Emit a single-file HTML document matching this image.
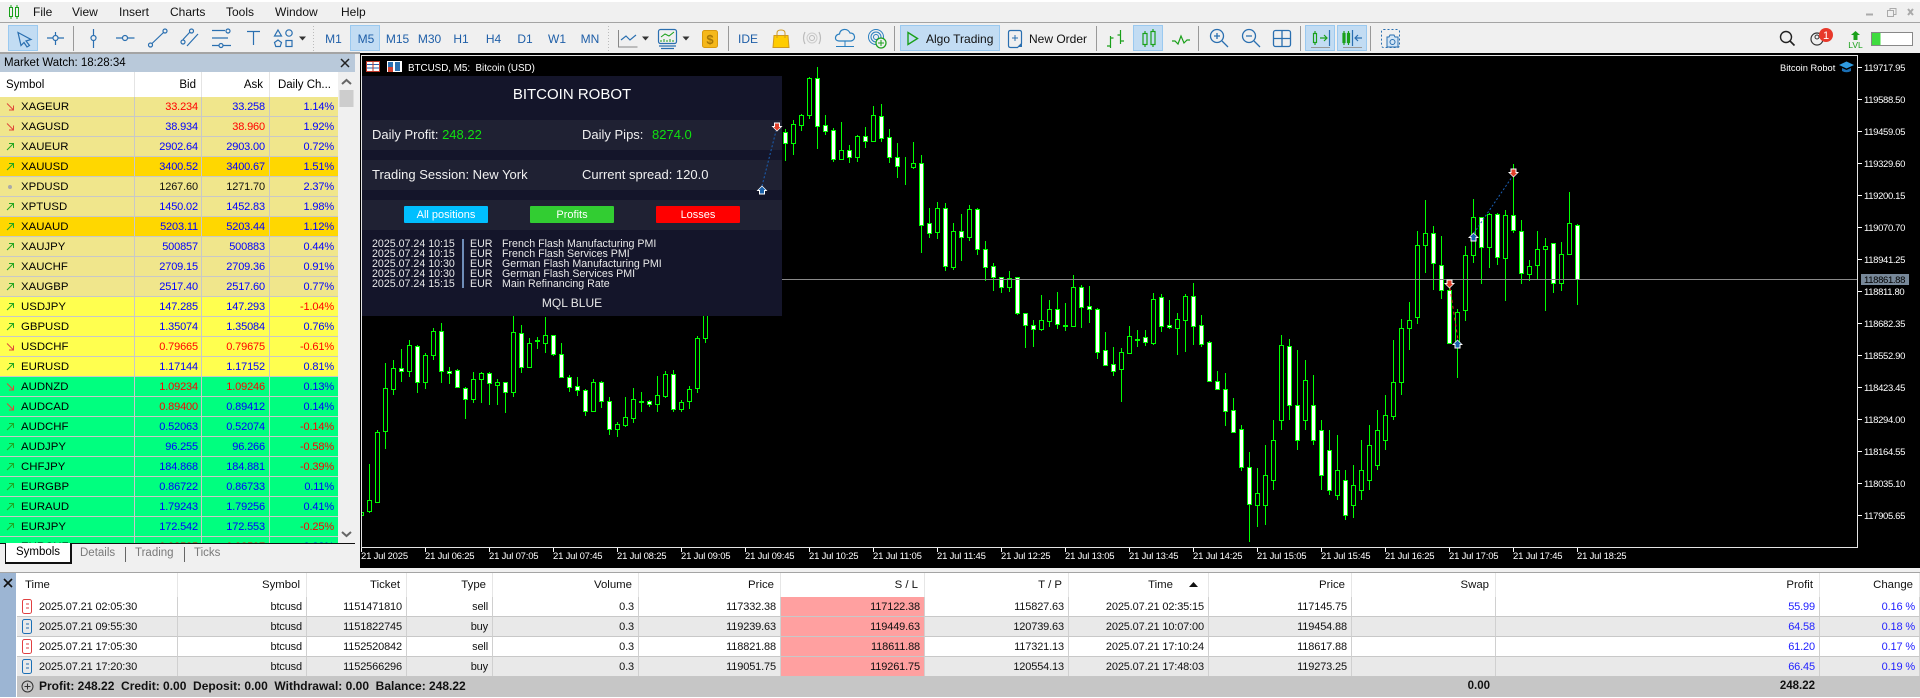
<!DOCTYPE html>
<html><head><meta charset="utf-8"><title>MT5</title>
<style>
html,body{margin:0;padding:0;width:1920px;height:698px;overflow:hidden;background:#f0f0f0;font-family:"Liberation Sans",sans-serif;color:#000}
.a{position:absolute}
svg text{font-family:"Liberation Sans",sans-serif}
#mw{left:0;top:54px;width:355px;height:489px;overflow:hidden;background:#f0f0f0}
#mwh{height:18px;background:#b9c9da;font-size:11.5px;line-height:18px;padding-left:4px;position:relative}
#mwc{height:25px;background:#fff;width:338px;position:relative;font-size:11.5px;line-height:26px}
#mwc span{position:absolute;top:0}
#mwc i{position:absolute;top:0;height:25px;width:1px;background:#e4e4e4}
.r{position:relative;height:19px;width:338px;border-bottom:1px solid #c8c8c8;font-size:11px;letter-spacing:-.15px;line-height:20px;color:#00f;overflow:hidden}
.r b{font-weight:normal;position:absolute;top:0;text-align:right;width:62px}
.r b.x{right:140px}.r b.y{right:73px}.r b.z{right:4px}
.r u{position:absolute;top:0;bottom:0;width:1px;background:#c8c8c8;text-decoration:none}
.r u.p{left:134px}.r u.q{left:201px}.r u.w{left:269px}
.r em{font-style:normal;position:absolute;left:21px;top:0;color:#000;font-size:11.4px;letter-spacing:0}
.r svg{position:absolute;left:6px;top:5px}
.k{background:#f0e68c}.g{background:#ffd700}.l{background:#ffff4f}.n{background:#00ff7f}
.d{color:#f00!important}.t{color:#111!important}
table{border-collapse:separate;border-spacing:0;table-layout:fixed;position:absolute;left:17px;top:573px;width:1903px;font-size:11px;letter-spacing:-.15px}
th{font-weight:normal;height:24px;padding:0 6px 0 0;text-align:right;border-right:1px solid #e6e6e6;background:#fff;font-size:11.4px;letter-spacing:0;color:#111;white-space:nowrap}
td{height:19px;padding:0 4px 0 0;text-align:right;border-right:1px solid #d0d0d0;border-bottom:1px solid #c8c8c8;white-space:nowrap;color:#111;overflow:hidden;background:#fff}
tr.z td{background:#e9e9e9}
td.sl,tr.z td.sl{background:#ffa0a0}
td.p{color:#22f}
td:first-child{text-align:left;padding-left:22px;position:relative}
td:first-child svg{position:absolute;left:5px;top:2px}
</style></head>
<body>
<svg width="0" height="0" style="position:absolute"><defs>
<g id="up"><path d="M1 8L7.500 1.500M3 1.500h4.500V6" fill="none" stroke="#22a522"/></g>
<g id="dw"><path d="M1 1.500L7.500 8M7.500 3.500V8H3" fill="none" stroke="#e0483a"/></g>
<g id="sd"><rect x=".5" y=".5" width="9" height="14" rx="2" fill="none" stroke="#e04040"/><path d="M4 5h3M4 9h3" stroke="#e04040"/></g>
<g id="bd"><rect x=".5" y=".5" width="9" height="14" rx="2" fill="none" stroke="#1a6fb5"/><path d="M4 5h3M4 9h3" stroke="#1a6fb5"/></g>
<g id="adn"><path d="M-3-4.500H3V-1H5.500L0 4.500-5.500-1H-3z" fill="#fff"/><path d="M-2-3.500H2V0H3.500L0 3.500-3.500 0H-2z" fill="#e0402a"/></g>
<g id="aup"><path d="M-3 4.500H3V1H5.500L0-4.500-5.500 1H-3z" fill="#fff"/><path d="M-2 3.500H2V0H3.500L0-3.500-3.500 0H-2z" fill="#1a62ac"/></g>
</defs></svg>

<!-- top bars -->
<svg class="a" style="left:0;top:0" width="1920" height="54" fill="none">
<rect width="1920" height="2" fill="#fff"/>
<rect y="22" width="1920" height="1" fill="#a4a4a4"/>
<rect y="52" width="360" height="2" fill="#a4a4a4"/>
<rect x="360" y="52" width="1560" height="1" fill="#f0f0f0"/>
<g stroke="#1aa01a"><rect x="9.500" y="7.500" width="3" height="9"/><rect x="15.500" y="7.500" width="3" height="9"/><path d="M11 5v2M11 17v2M17 5v2M17 17v2"/></g>
<g font-size="12" fill="#111"><text x="33" y="16">File</text><text x="72" y="16">View</text><text x="119" y="16">Insert</text><text x="170" y="16">Charts</text><text x="226" y="16">Tools</text><text x="275" y="16">Window</text><text x="341" y="16">Help</text></g>
<g stroke="#aaa" stroke-width="2"><path d="M1866 14.500h7M1908 9l5 6M1913 9l-5 6"/></g><g stroke="#aaa"><rect x="1887.500" y="10.500" width="6" height="6"/><path d="M1890 10V8.500h6v6H1894"/></g>
<g fill="#c2dcf3" stroke="#9ac9f0"><rect x="8.500" y="25.500" width="29" height="25"/><rect x="350.500" y="25.500" width="29" height="25"/><rect x="900.500" y="25.500" width="99" height="25"/><rect x="1133.500" y="25.500" width="29" height="25"/><rect x="1305.500" y="25.500" width="29" height="25"/><rect x="1337.500" y="25.500" width="29" height="25"/></g>
<g stroke="#2a6fb0" stroke-width="1.200">
<path d="M18 32.500L31 39.500 26 41 29.500 45.500 27 47 24 42.500 21 45.500Z"/>
<path d="M47 38h6M58 38h6M55.500 32v4M55.500 41v4"/><circle cx="55.500" cy="38" r="2.500"/>
<path d="M93.500 29v6.500M93.500 40.500V48"/><circle cx="93.500" cy="38" r="2.500"/>
<path d="M116 38h6.500M127.500 38h7"/><circle cx="125" cy="38" r="2.500"/>
<path d="M152 43.500L163.500 32.500"/><circle cx="150.500" cy="45" r="2"/><circle cx="165" cy="31" r="2"/>
<path d="M183 39.500L190 32M187 46L198 34"/><circle cx="183" cy="42" r="2"/><circle cx="191.500" cy="31" r="2"/>
<path d="M212 30.500h13M212 38h16M212 45.500h19"/><circle cx="228" cy="31" r="2"/><circle cx="221" cy="45.500" r="2" fill="#f0f0f0"/>
<path d="M247 31.500h13M253.500 31.500V45"/>
<path d="M278 30l3.500 6h-7z"/><circle cx="289" cy="33" r="3.200"/><path d="M278 40l3.500 2.500-1.300 4h-4.400l-1.300-4z"/><rect x="286" y="40.500" width="6" height="6"/>
</g>
<path d="M299 36.500h7l-3.500 4z" fill="#333"/>
<path d="M73.500 26v25M728.500 26v25M894.500 26v25M1096.500 26v25M1198.500 26v25M1300.500 26v25M1370.500 26v25" stroke="#999"/>
<path d="M313.500 26v25M608.500 26v25" stroke="#bbb" stroke-dasharray="1 2"/>
<g font-size="12" fill="#1f5fa8" text-anchor="middle"><text x="333.500" y="43">M1</text><text x="366" y="43">M5</text><text x="397.500" y="43">M15</text><text x="429.500" y="43">M30</text><text x="461" y="43">H1</text><text x="493.500" y="43">H4</text><text x="525" y="43">D1</text><text x="557" y="43">W1</text><text x="590" y="43">MN</text><text x="748" y="43">IDE</text></g>
<!-- line chart -->
<path d="M618.500 30v17h19" stroke="#888"/><path d="M621 40l5-4 4 4 6-5" stroke="#2a6fb0" stroke-width="1.200"/>
<path d="M642 36.500h7l-3.500 4z" fill="#333"/>
<rect x="658.500" y="29.500" width="18" height="14" rx="2" stroke="#2a6fb0" stroke-width="1.200"/><path d="M661 37l4-3 4 2 5-4" stroke="#1aa01a"/><path d="M661 42v-2M664 42v-3M667 42v-2M670 42v-3M673 42v-2" stroke="#1aa01a"/><path d="M659 46h17M661 48.500h13" stroke="#2a6fb0" stroke-width="1.200"/>
<path d="M682.500 36.500h7l-3.500 4z" fill="#333"/>
<rect x="702.500" y="30.500" width="15" height="17" rx="2" fill="#f5b81c" stroke="#d99a10"/><text x="710" y="44" font-size="13" font-weight="bold" fill="#a87808" text-anchor="middle">$</text>
<path d="M774 35.500h14l1 12h-16z" fill="#ffcc00" stroke="#d09a20"/><path d="M777 38v-5q0-3 4-3t4 3v5" stroke="#d09a20"/>
<circle cx="812" cy="38" r="2.500" stroke="#bbb"/><circle cx="812" cy="38" r="5" stroke="#ccc"/><path d="M805 32q-3 6 0 12M819 32q3 6 0 12" stroke="#bbb" stroke-width="1.200"/>
<path d="M839 41h12q4-1 3.500-4.500T850 33q-2-4-6-3.500T839.500 34q-3.500.5-4 3.500T839 41z" stroke="#2a7fc0" stroke-width="1.200"/><path d="M845 41v5M836 46.500h18" stroke="#2a7fc0"/>
<circle cx="876" cy="37" r="7.500" stroke="#2a7fc0"/><circle cx="876" cy="37" r="5" stroke="#2a7fc0"/><circle cx="876" cy="37" r="2.500" stroke="#2a7fc0"/><circle cx="881" cy="43" r="5" fill="#f0f0f0" stroke="#1aa01a" stroke-width="1.200"/><path d="M878 43h6M881 40v6" stroke="#1aa01a"/>
<path d="M908 32.500l9.500 6-9.500 6z" stroke="#1aa01a" stroke-width="1.400"/>
<text x="926" y="43" font-size="12" fill="#111">Algo Trading</text>
<path d="M1010.500 30.500h9q2 0 2 2v11l-4 4h-7q-2 0-2-2v-13q0-2 2-2z" stroke="#2a6fb0" stroke-width="1.200"/><path d="M1012 38h6M1015 35v6" stroke="#2a6fb0"/><path d="M1018 47l4-4v4z" fill="#2a6fb0"/>
<text x="1029" y="43" font-size="12" fill="#111">New Order</text>
<g stroke="#1aa01a" stroke-width="1.200"><path d="M1110.500 36v12M1107 46h3.500M1110.500 38h3M1120.500 30v14M1120.500 35h-3M1120.500 41h3.500"/>
<rect x="1143" y="33.500" width="4" height="11"/><rect x="1151" y="31.500" width="4" height="13"/><path d="M1145 31v2.500M1145 44.500V47M1153 29v2.500M1153 44.500V47"/>
<path d="M1172 41h3l3 3 3-8 3 7 3-3h3"/></g>
<g stroke="#2a6fb0" stroke-width="1.300"><circle cx="1217" cy="36" r="6.500"/><path d="M1222 41l6 6M1214 36h6M1217 33v6"/><circle cx="1249" cy="36" r="6.500"/><path d="M1254 41l6 6M1246 36h6"/><rect x="1273.500" y="30.500" width="17" height="16" rx="2"/><path d="M1282 30.500v16M1273.500 38.500h17"/></g>
<g stroke="#1aa01a" stroke-width="1.200"><rect x="1313.500" y="33.500" width="3" height="9"/><path d="M1315 31v2.500M1315 42.500V45M1320 38h7M1324 35l3 3-3 3"/></g><path d="M1329.500 30v16" stroke="#2a6fb0" stroke-width="1.200"/><path d="M1311 47.500h19" stroke="#999"/>
<g stroke="#1aa01a" stroke-width="1.200"><rect x="1343" y="33.500" width="2" height="9"/><rect x="1347.500" y="33.500" width="2" height="9"/><path d="M1344 31v14M1348.500 31v14"/></g><path d="M1352.500 30v16M1362 38h-7M1358 35l-3 3 3 3" stroke="#2a6fb0" stroke-width="1.200"/><path d="M1343 47.500h19" stroke="#999"/>
<rect x="1381.500" y="29.500" width="18" height="18" rx="2" stroke="#2a6fb0" stroke-dasharray="2 2"/><path d="M1387 37h2l1-2h4l1 2h3v10h-11z" fill="#d4e6f6" stroke="#2a6fb0"/><circle cx="1392.500" cy="42" r="2.500" stroke="#2a6fb0"/>
<circle cx="1786" cy="37" r="5.500" stroke="#222" stroke-width="1.400"/><path d="M1790 41l4.500 4.500" stroke="#222" stroke-width="1.600"/>
<circle cx="1817" cy="39" r="6" stroke="#333" stroke-width="1.200"/><circle cx="1817" cy="37" r="2" stroke="#333"/><circle cx="1826" cy="35" r="7" fill="#e8392b"/><text x="1826" y="39" font-size="11" fill="#fff" text-anchor="middle">1</text>
<path d="M1855.500 31l4.500 4h-2.500v5h-4v-5H1851z" fill="#1aa01a"/><text x="1855.500" y="48" font-size="8.500" fill="#1aa01a" text-anchor="middle">LVL</text>
<rect x="1871.500" y="32.500" width="41" height="13" fill="#fff" stroke="#888"/><rect x="1872" y="33" width="8.500" height="12" fill="#3fdc3f"/>
</svg>

<!-- market watch -->
<div class="a" id="mw">
<div id="mwh">Market Watch: 18:28:34<svg class="a" style="left:340px;top:4px" width="10" height="10"><path d="M1 1l8 8M9 1l-8 8" stroke="#222" stroke-width="1.500"/></svg></div>
<div id="mwc"><span style="left:6px">Symbol</span><span style="right:142px">Bid</span><span style="right:75px">Ask</span><span style="right:7px">Daily Ch...</span><i style="left:134px"></i><i style="left:201px"></i><i style="left:269px"></i></div>
<div class="r k"><svg width="10" height="10"><use href="#dw"/></svg><em>XAGEUR</em><b class="x d">33.234</b><b class="y">33.258</b><b class="z">1.14%</b><u class="p"></u><u class="q"></u><u class="w"></u></div>
<div class="r k"><svg width="10" height="10"><use href="#dw"/></svg><em>XAGUSD</em><b class="x">38.934</b><b class="y d">38.960</b><b class="z">1.92%</b><u class="p"></u><u class="q"></u><u class="w"></u></div>
<div class="r k"><svg width="10" height="10"><use href="#up"/></svg><em>XAUEUR</em><b class="x">2902.64</b><b class="y">2903.00</b><b class="z">0.72%</b><u class="p"></u><u class="q"></u><u class="w"></u></div>
<div class="r g"><svg width="10" height="10"><use href="#up"/></svg><em>XAUUSD</em><b class="x">3400.52</b><b class="y">3400.67</b><b class="z">1.51%</b><u class="p"></u><u class="q"></u><u class="w"></u></div>
<div class="r k"><svg width="10" height="10"><circle cx="4" cy="5" r="2" fill="#aaa"/></svg><em>XPDUSD</em><b class="x t">1267.60</b><b class="y t">1271.70</b><b class="z">2.37%</b><u class="p"></u><u class="q"></u><u class="w"></u></div>
<div class="r k"><svg width="10" height="10"><use href="#up"/></svg><em>XPTUSD</em><b class="x">1450.02</b><b class="y">1452.83</b><b class="z">1.98%</b><u class="p"></u><u class="q"></u><u class="w"></u></div>
<div class="r g"><svg width="10" height="10"><use href="#up"/></svg><em>XAUAUD</em><b class="x">5203.11</b><b class="y">5203.44</b><b class="z">1.12%</b><u class="p"></u><u class="q"></u><u class="w"></u></div>
<div class="r k"><svg width="10" height="10"><use href="#up"/></svg><em>XAUJPY</em><b class="x">500857</b><b class="y">500883</b><b class="z">0.44%</b><u class="p"></u><u class="q"></u><u class="w"></u></div>
<div class="r k"><svg width="10" height="10"><use href="#up"/></svg><em>XAUCHF</em><b class="x">2709.15</b><b class="y">2709.36</b><b class="z">0.91%</b><u class="p"></u><u class="q"></u><u class="w"></u></div>
<div class="r k"><svg width="10" height="10"><use href="#up"/></svg><em>XAUGBP</em><b class="x">2517.40</b><b class="y">2517.60</b><b class="z">0.77%</b><u class="p"></u><u class="q"></u><u class="w"></u></div>
<div class="r l"><svg width="10" height="10"><use href="#up"/></svg><em>USDJPY</em><b class="x">147.285</b><b class="y">147.293</b><b class="z d">-1.04%</b><u class="p"></u><u class="q"></u><u class="w"></u></div>
<div class="r l"><svg width="10" height="10"><use href="#up"/></svg><em>GBPUSD</em><b class="x">1.35074</b><b class="y">1.35084</b><b class="z">0.76%</b><u class="p"></u><u class="q"></u><u class="w"></u></div>
<div class="r l"><svg width="10" height="10"><use href="#dw"/></svg><em>USDCHF</em><b class="x d">0.79665</b><b class="y d">0.79675</b><b class="z d">-0.61%</b><u class="p"></u><u class="q"></u><u class="w"></u></div>
<div class="r l"><svg width="10" height="10"><use href="#up"/></svg><em>EURUSD</em><b class="x">1.17144</b><b class="y">1.17152</b><b class="z">0.81%</b><u class="p"></u><u class="q"></u><u class="w"></u></div>
<div class="r n"><svg width="10" height="10"><use href="#dw"/></svg><em>AUDNZD</em><b class="x d">1.09234</b><b class="y d">1.09246</b><b class="z">0.13%</b><u class="p"></u><u class="q"></u><u class="w"></u></div>
<div class="r n"><svg width="10" height="10"><use href="#dw"/></svg><em>AUDCAD</em><b class="x d">0.89400</b><b class="y">0.89412</b><b class="z">0.14%</b><u class="p"></u><u class="q"></u><u class="w"></u></div>
<div class="r n"><svg width="10" height="10"><use href="#up"/></svg><em>AUDCHF</em><b class="x">0.52063</b><b class="y">0.52074</b><b class="z d">-0.14%</b><u class="p"></u><u class="q"></u><u class="w"></u></div>
<div class="r n"><svg width="10" height="10"><use href="#up"/></svg><em>AUDJPY</em><b class="x">96.255</b><b class="y">96.266</b><b class="z d">-0.58%</b><u class="p"></u><u class="q"></u><u class="w"></u></div>
<div class="r n"><svg width="10" height="10"><use href="#up"/></svg><em>CHFJPY</em><b class="x">184.868</b><b class="y">184.881</b><b class="z d">-0.39%</b><u class="p"></u><u class="q"></u><u class="w"></u></div>
<div class="r n"><svg width="10" height="10"><use href="#up"/></svg><em>EURGBP</em><b class="x">0.86722</b><b class="y">0.86733</b><b class="z">0.11%</b><u class="p"></u><u class="q"></u><u class="w"></u></div>
<div class="r n"><svg width="10" height="10"><use href="#up"/></svg><em>EURAUD</em><b class="x">1.79243</b><b class="y">1.79256</b><b class="z">0.41%</b><u class="p"></u><u class="q"></u><u class="w"></u></div>
<div class="r n"><svg width="10" height="10"><use href="#up"/></svg><em>EURJPY</em><b class="x">172.542</b><b class="y">172.553</b><b class="z d">-0.25%</b><u class="p"></u><u class="q"></u><u class="w"></u></div>
<div class="r n"><svg width="10" height="10"><use href="#dw"/></svg><em>EURCHF</em><b class="x d">0.93585</b><b class="y d">0.93597</b><b class="z">0.33%</b><u class="p"></u><u class="q"></u><u class="w"></u></div>
<svg class="a" style="left:338px;top:18px" width="17" height="471"><path d="M4 12l4.500-4 4.500 4" fill="none" stroke="#666" stroke-width="2"/><rect x="1.500" y="18" width="14" height="17" fill="#cdcdcd"/><path d="M4 460l4.500 4 4.500-4" fill="none" stroke="#666" stroke-width="2"/></svg>
</div>
<!-- tabs -->
<div class="a" style="left:0;top:543px;width:355px;height:1px;background:#111"></div>
<div class="a" style="left:5px;top:543px;width:64px;height:19px;background:#fff;border:1px solid #111;border-top:0;border-right-width:2px;border-bottom-width:2px;font-size:11.5px;line-height:19px;text-align:center">Symbols</div>
<div class="a" style="left:80px;top:546px;font-size:11.5px;color:#7a7a7a;line-height:14px">Details</div>
<div class="a" style="left:125px;top:547px;width:1px;height:15px;background:#666"></div>
<div class="a" style="left:135px;top:546px;font-size:11.5px;color:#7a7a7a;line-height:14px">Trading</div>
<div class="a" style="left:184px;top:547px;width:1px;height:15px;background:#666"></div>
<div class="a" style="left:194px;top:546px;font-size:11.5px;color:#7a7a7a;line-height:14px">Ticks</div>

<!-- chart -->
<svg class="a" style="left:0;top:0" width="1920" height="572" viewBox="0 0 1920 572">
<rect x="360" y="53" width="1560" height="515" fill="#000"/>
<path d="M361.500 547V55.500H1857.500V547.500H361" fill="none" stroke="#e4e4e4"/>
<svg x="362" y="56" width="1495" height="491" viewBox="362 56 1495 491" shape-rendering="crispEdges">
<path fill="none" stroke="#0f0" d="M369.500 464V513M377.500 430V503M385.500 363V449M393.500 360V395M401.500 349V382M409.500 340V377M417.500 345V393M425.500 353V389M433.500 328V360M441.500 323V383M449.500 367V384M457.500 369V386M465.500 387V419M473.500 372V403M481.500 372V403M489.500 372V405M497.500 379V405M505.500 382V413M513.500 316V397M521.500 325V373M529.500 338V368M537.500 337V349M545.500 317V353M553.500 335V356M561.500 343V378M569.500 375V392M577.500 377V396M585.500 389V416M593.500 379V412M601.500 381V408M609.500 397V435M617.500 422V437M625.500 397V427M633.500 388V423M641.500 392V412M649.500 400V407M657.500 376V412M665.500 371V398M673.500 370V412M681.500 400V412M689.500 386V409M697.500 336V393M705.500 300V343M785.500 129V161M793.500 120V155M801.500 114V131M809.500 77V119M817.500 67V149M825.500 115V135M833.500 128V162M841.500 122V159M849.500 145V163M857.500 135V162M865.500 127V148M873.500 106V142M881.500 104V142M889.500 129V163M897.500 143V178M905.500 157V185M913.500 142V169M921.500 155V253M929.500 208V238M937.500 202V239M945.500 203V271M953.500 223V270M961.500 214V261M969.500 205V241M977.500 208V255M985.500 241V281M993.500 263V291M1001.500 277V293M1009.500 271V292M1017.500 277V315M1025.500 313V348M1033.500 320V347M1041.500 295V331M1049.500 300V327M1057.500 292V329M1065.500 303V331M1073.500 275V326M1081.500 285V328M1089.500 286V323M1097.500 308V359M1105.500 332V366M1113.500 347V376M1121.500 348V402M1129.500 326V353M1137.500 330V347M1145.500 330V346M1153.500 293V345M1161.500 294V332M1169.500 300V329M1177.500 313V355M1185.500 294V352M1193.500 283V345M1201.500 315V347M1209.500 341V381M1217.500 371V389M1225.500 373V426M1233.500 398V432M1241.500 425V471M1249.500 452V542M1257.500 468V527M1265.500 445V525M1273.500 420V490M1281.500 335V430M1289.500 339V420M1297.500 350V450M1305.500 360V430M1313.500 375V445M1321.500 420V490M1329.500 430V495M1337.500 435V500M1345.500 470V520M1353.500 465V518M1361.500 440V500M1369.500 425V490M1377.500 410V470M1385.500 395V450M1393.500 340V420M1401.500 319V395M1409.500 302V350M1417.500 231V324M1425.500 200V273M1433.500 226V290M1441.500 236V299M1449.500 283V343M1457.500 309V378M1465.500 246V321M1473.500 199V263M1481.500 217V284M1489.500 213V268M1497.500 213V265M1505.500 210V301M1513.500 164V233M1521.500 220V284M1529.500 260V281M1537.500 231V279M1545.500 238V311M1553.500 243V293M1561.500 242V291M1569.500 192V254M1577.500 224V305"/>
<path fill="#000" stroke="#0f0" d="M359.500 512.500h4V515.500h-4zM367.500 500.500h4V511.500h-4zM375.500 432.500h4V502.500h-4zM383.500 388.500h4V431.500h-4zM391.500 368.500h4V389.500h-4zM407.500 345.500h4V371.500h-4zM423.500 355.500h4V382.500h-4zM431.500 331.500h4V355.500h-4zM471.500 379.500h4V399.500h-4zM479.500 373.500h4V379.500h-4zM495.500 382.500h4V385.500h-4zM511.500 332.500h4V392.500h-4zM527.500 343.500h4V367.500h-4zM543.500 335.500h4V343.500h-4zM591.500 382.500h4V411.500h-4zM615.500 424.500h4V429.500h-4zM623.500 417.500h4V425.500h-4zM631.500 399.500h4V418.500h-4zM655.500 395.500h4V404.500h-4zM663.500 374.500h4V396.500h-4zM679.500 402.500h4V409.500h-4zM687.500 389.500h4V401.500h-4zM695.500 338.500h4V388.500h-4zM703.500 300.500h4V338.500h-4zM791.500 124.500h4V143.500h-4zM799.500 115.500h4V125.500h-4zM807.500 78.500h4V115.500h-4zM839.500 150.500h4V159.500h-4zM855.500 136.500h4V157.500h-4zM871.500 115.500h4V141.500h-4zM911.500 163.500h4V167.500h-4zM935.500 208.500h4V232.500h-4zM951.500 231.500h4V267.500h-4zM967.500 209.500h4V237.500h-4zM1007.500 278.500h4V287.500h-4zM1039.500 320.500h4V329.500h-4zM1047.500 309.500h4V321.500h-4zM1071.500 287.500h4V326.500h-4zM1119.500 352.500h4V369.500h-4zM1127.500 336.500h4V353.500h-4zM1151.500 299.500h4V343.500h-4zM1175.500 319.500h4V328.500h-4zM1183.500 296.500h4V320.500h-4zM1255.500 493.500h4V505.500h-4zM1263.500 475.500h4V505.500h-4zM1271.500 440.500h4V480.500h-4zM1279.500 345.500h4V420.500h-4zM1303.500 380.500h4V420.500h-4zM1335.500 470.500h4V495.500h-4zM1351.500 485.500h4V505.500h-4zM1359.500 470.500h4V490.500h-4zM1367.500 445.500h4V480.500h-4zM1375.500 430.500h4V465.500h-4zM1383.500 415.500h4V440.500h-4zM1391.500 382.500h4V416.500h-4zM1399.500 328.500h4V382.500h-4zM1407.500 320.500h4V328.500h-4zM1415.500 245.500h4V317.500h-4zM1423.500 233.500h4V245.500h-4zM1455.500 312.500h4V343.500h-4zM1463.500 255.500h4V310.500h-4zM1471.500 217.500h4V255.500h-4zM1487.500 214.500h4V247.500h-4zM1503.500 215.500h4V258.500h-4zM1527.500 266.500h4V274.500h-4zM1535.500 249.500h4V265.500h-4zM1543.500 246.500h4V249.500h-4zM1559.500 254.500h4V283.500h-4zM1567.500 223.500h4V254.500h-4z"/>
<path fill="#fff" stroke="#0f0" d="M399.500 368.500h4V371.500h-4zM415.500 346.500h4V382.500h-4zM439.500 331.500h4V371.500h-4zM447.500 371.500h4V373.500h-4zM455.500 370.500h4V387.500h-4zM463.500 388.500h4V399.500h-4zM487.500 373.500h4V383.500h-4zM503.500 382.500h4V392.500h-4zM519.500 333.500h4V367.500h-4zM551.500 335.500h4V354.500h-4zM559.500 354.500h4V377.500h-4zM567.500 377.500h4V387.500h-4zM575.500 386.500h4V390.500h-4zM583.500 390.500h4V411.500h-4zM599.500 382.500h4V401.500h-4zM607.500 401.500h4V429.500h-4zM647.500 401.500h4V404.500h-4zM671.500 374.500h4V409.500h-4zM783.500 132.500h4V143.500h-4zM815.500 78.500h4V126.500h-4zM823.500 125.500h4V131.500h-4zM831.500 130.500h4V159.500h-4zM847.500 150.500h4V157.500h-4zM863.500 136.500h4V141.500h-4zM879.500 116.500h4V138.500h-4zM887.500 137.500h4V157.500h-4zM895.500 157.500h4V166.500h-4zM919.500 163.500h4V225.500h-4zM927.500 223.500h4V233.500h-4zM943.500 208.500h4V266.500h-4zM959.500 231.500h4V237.500h-4zM975.500 209.500h4V249.500h-4zM983.500 249.500h4V267.500h-4zM991.500 266.500h4V277.500h-4zM999.500 277.500h4V287.500h-4zM1015.500 277.500h4V313.500h-4zM1023.500 313.500h4V325.500h-4zM1031.500 325.500h4V329.500h-4zM1055.500 309.500h4V324.500h-4zM1079.500 287.500h4V307.500h-4zM1087.500 306.500h4V309.500h-4zM1095.500 309.500h4V352.500h-4zM1103.500 350.500h4V365.500h-4zM1111.500 364.500h4V371.500h-4zM1143.500 337.500h4V342.500h-4zM1159.500 297.500h4V326.500h-4zM1167.500 325.500h4V327.500h-4zM1191.500 296.500h4V326.500h-4zM1199.500 325.500h4V344.500h-4zM1207.500 342.500h4V381.500h-4zM1215.500 381.500h4V389.500h-4zM1223.500 389.500h4V411.500h-4zM1231.500 410.500h4V432.500h-4zM1239.500 429.500h4V467.500h-4zM1247.500 467.500h4V504.500h-4zM1287.500 346.500h4V405.500h-4zM1295.500 405.500h4V440.500h-4zM1311.500 405.500h4V440.500h-4zM1319.500 430.500h4V475.500h-4zM1327.500 450.500h4V490.500h-4zM1343.500 480.500h4V515.500h-4zM1431.500 233.500h4V263.500h-4zM1439.500 265.500h4V290.500h-4zM1447.500 290.500h4V343.500h-4zM1479.500 217.500h4V247.500h-4zM1495.500 214.500h4V257.500h-4zM1511.500 215.500h4V230.500h-4zM1519.500 231.500h4V273.500h-4zM1551.500 243.500h4V283.500h-4zM1575.500 225.500h4V279.500h-4z"/>
<path stroke="#0f0" stroke-width="2" d="M535 341h5M639 402h5M1063 326h5M1135 340h5"/>
</svg>
<rect x="362" y="279" width="1495" height="1" fill="#8a8a8a"/>
<!-- price axis -->
<path stroke="#fff" d="M1858 67.500h4M1858 99.500h4M1858 131.500h4M1858 163.500h4M1858 195.500h4M1858 227.500h4M1858 259.500h4M1858 291.500h4M1858 323.500h4M1858 355.500h4M1858 387.500h4M1858 419.500h4M1858 451.500h4M1858 483.500h4M1858 515.500h4"/>
<g font-size="9.500" fill="#fff" style="letter-spacing:-.35px"><text x="1864" y="71">119717.95</text><text x="1864" y="103">119588.50</text><text x="1864" y="135">119459.05</text><text x="1864" y="167">119329.60</text><text x="1864" y="199">119200.15</text><text x="1864" y="231">119070.70</text><text x="1864" y="263">118941.25</text><text x="1864" y="295">118811.80</text><text x="1864" y="327">118682.35</text><text x="1864" y="359">118552.90</text><text x="1864" y="391">118423.45</text><text x="1864" y="423">118294.00</text><text x="1864" y="455">118164.55</text><text x="1864" y="487">118035.10</text><text x="1864" y="519">117905.65</text></g>
<rect x="1861" y="274" width="48" height="11" fill="#778899"/>
<text x="1864" y="283" font-size="9.500" fill="#000" style="letter-spacing:-.35px">118861.88</text>
<!-- time axis -->
<path stroke="#fff" d="M361.500 548v4M425.500 548v4M489.500 548v4M553.500 548v4M617.500 548v4M681.500 548v4M745.500 548v4M809.500 548v4M873.500 548v4M937.500 548v4M1001.500 548v4M1065.500 548v4M1129.500 548v4M1193.500 548v4M1257.500 548v4M1321.500 548v4M1385.500 548v4M1449.500 548v4M1513.500 548v4M1577.500 548v4"/>
<g font-size="9.500" fill="#fff" style="letter-spacing:-.2px"><text x="361" y="559">21 Jul 2025</text><text x="425" y="559">21 Jul 06:25</text><text x="489" y="559">21 Jul 07:05</text><text x="553" y="559">21 Jul 07:45</text><text x="617" y="559">21 Jul 08:25</text><text x="681" y="559">21 Jul 09:05</text><text x="745" y="559">21 Jul 09:45</text><text x="809" y="559">21 Jul 10:25</text><text x="873" y="559">21 Jul 11:05</text><text x="937" y="559">21 Jul 11:45</text><text x="1001" y="559">21 Jul 12:25</text><text x="1065" y="559">21 Jul 13:05</text><text x="1129" y="559">21 Jul 13:45</text><text x="1193" y="559">21 Jul 14:25</text><text x="1257" y="559">21 Jul 15:05</text><text x="1321" y="559">21 Jul 15:45</text><text x="1385" y="559">21 Jul 16:25</text><text x="1449" y="559">21 Jul 17:05</text><text x="1513" y="559">21 Jul 17:45</text><text x="1577" y="559">21 Jul 18:25</text></g>
<!-- chart title -->
<rect x="366.500" y="61.500" width="13" height="10" fill="#fff" stroke="#c0392b"/><path d="M367 64.500h12M367 68h12" stroke="#2a5fb0"/><path d="M373 62v9" stroke="#c0392b"/>
<rect x="387" y="61" width="15" height="11" fill="#fff"/><rect x="388" y="62" width="5" height="5" fill="#2a6fb0"/><rect x="395" y="62" width="5" height="9" fill="#2a6fb0"/><rect x="388" y="67" width="5" height="5" fill="#d04030"/>
<text x="408" y="71" font-size="9.800" fill="#fff" xml:space="preserve">BTCUSD, M5:  Bitcoin (USD)</text>
<text x="1780" y="71" font-size="9.300" fill="#fff">Bitcoin Robot</text>
<path d="M1839 65l7.500-3.500 7.500 3.500-7.500 3.500z" fill="#2f9be0"/><path d="M1842 68v3q4.500 2.500 9 0v-3l-4.500 2z" fill="#1a6fb5"/>
<!-- robot panel -->
<rect x="362" y="76" width="420" height="240" fill="#14152a"/>
<rect x="362" y="120" width="420" height="30" fill="#1f2133"/>
<rect x="362" y="160" width="420" height="30" fill="#1f2133"/>
<rect x="362" y="200" width="420" height="30" fill="#1f2133"/>
<text x="572" y="99" font-size="15" fill="#fff" text-anchor="middle">BITCOIN ROBOT</text>
<g font-size="13" fill="#f0f0f0"><text x="372" y="139">Daily Profit: <tspan fill="#10e010">248.22</tspan></text><text x="582" y="139">Daily Pips:</text><text x="652" y="139" fill="#10e010">8274.0</text><text x="372" y="179">Trading Session: New York</text><text x="582" y="179">Current spread: 120.0</text></g>
<rect x="404" y="206" width="84" height="17" rx="1" fill="#00bfff"/><rect x="530" y="206" width="84" height="17" rx="1" fill="#32cd32"/><rect x="656" y="206" width="84" height="17" rx="1" fill="#f00"/>
<g font-size="11" fill="#fff" text-anchor="middle"><text x="446" y="218">All positions</text><text x="572" y="218">Profits</text><text x="698" y="218">Losses</text></g>
<rect x="462" y="239" width="2" height="49" fill="#6f8db8"/>
<g font-size="10.650" fill="#e8e8e8"><text x="372" y="247">2025.07.24 10:15</text><text x="470" y="247">EUR</text><text x="502" y="247">French Flash Manufacturing PMI</text><text x="372" y="257">2025.07.24 10:15</text><text x="470" y="257">EUR</text><text x="502" y="257">French Flash Services PMI</text><text x="372" y="267">2025.07.24 10:30</text><text x="470" y="267">EUR</text><text x="502" y="267">German Flash Manufacturing PMI</text><text x="372" y="277">2025.07.24 10:30</text><text x="470" y="277">EUR</text><text x="502" y="277">German Flash Services PMI</text><text x="372" y="287">2025.07.24 15:15</text><text x="470" y="287">EUR</text><text x="502" y="287">Main Refinancing Rate</text></g>
<text x="572" y="307" font-size="12" fill="#e8e8e8" text-anchor="middle">MQL BLUE</text>
<!-- trade marks -->
<g fill="none" stroke-width="1"><path d="M762 186L776 131" stroke="#1a5fb4" stroke-dasharray="2 2"/><path d="M1474 233L1512 177" stroke="#1a5fb4" stroke-dasharray="2 2"/><path d="M1450 288L1458 340" stroke="#e03020" stroke-dasharray="3 3"/></g>
<use href="#adn" x="777" y="127"/><use href="#aup" x="762" y="190"/><use href="#aup" x="1473.500" y="237"/><use href="#adn" x="1513.500" y="173"/><use href="#adn" x="1449.500" y="284"/><use href="#aup" x="1457.500" y="344"/>
</svg>

<!-- bottom panel -->
<div class="a" style="left:0;top:572px;width:1920px;height:1px;background:#a4a4a4"></div>
<div class="a" style="left:0;top:573px;width:16px;height:124px;background:#9cb5d3"></div>
<div class="a" style="left:16px;top:573px;width:1px;height:124px;background:#fff"></div>
<svg class="a" style="left:3px;top:578px" width="10" height="10"><path d="M1 1l8 8M9 1l-8 8" stroke="#111" stroke-width="1.600"/></svg>
<table>
<colgroup><col style="width:161px"><col style="width:129px"><col style="width:100px"><col style="width:86px"><col style="width:146px"><col style="width:142px"><col style="width:144px"><col style="width:144px"><col style="width:140px"><col style="width:143px"><col style="width:144px"><col style="width:324px"><col style="width:100px"></colgroup>
<tr><th style="text-align:left;padding-left:8px">Time</th><th>Symbol</th><th>Ticket</th><th>Type</th><th>Volume</th><th>Price</th><th>S / L</th><th>T / P</th><th style="padding-right:35px">Time</th><th>Price</th><th>Swap</th><th>Profit</th><th>Change</th></tr>
<tr><td><svg width="10" height="15"><use href="#sd"/></svg>2025.07.21 02:05:30</td><td>btcusd</td><td>1151471810</td><td>sell</td><td>0.3</td><td>117332.38</td><td class="sl">117122.38</td><td>115827.63</td><td>2025.07.21 02:35:15</td><td>117145.75</td><td></td><td class="p">55.99</td><td class="p">0.16 %</td></tr>
<tr class="z"><td><svg width="10" height="15"><use href="#bd"/></svg>2025.07.21 09:55:30</td><td>btcusd</td><td>1151822745</td><td>buy</td><td>0.3</td><td>119239.63</td><td class="sl">119449.63</td><td>120739.63</td><td>2025.07.21 10:07:00</td><td>119454.88</td><td></td><td class="p">64.58</td><td class="p">0.18 %</td></tr>
<tr><td><svg width="10" height="15"><use href="#sd"/></svg>2025.07.21 17:05:30</td><td>btcusd</td><td>1152520842</td><td>sell</td><td>0.3</td><td>118821.88</td><td class="sl">118611.88</td><td>117321.13</td><td>2025.07.21 17:10:24</td><td>118617.88</td><td></td><td class="p">61.20</td><td class="p">0.17 %</td></tr>
<tr class="z"><td><svg width="10" height="15"><use href="#bd"/></svg>2025.07.21 17:20:30</td><td>btcusd</td><td>1152566296</td><td>buy</td><td>0.3</td><td>119051.75</td><td class="sl">119261.75</td><td>120554.13</td><td>2025.07.21 17:48:03</td><td>119273.25</td><td></td><td class="p">66.45</td><td class="p">0.19 %</td></tr>
</table>
<svg class="a" style="left:1188px;top:582px" width="12" height="6"><path d="M1 5h9L5.500 0z" fill="#111"/></svg>
<div class="a" style="left:17px;top:676px;width:1903px;height:21px;background:#c6c6c6"></div>
<svg class="a" style="left:21px;top:680px" width="13" height="13" fill="none"><circle cx="6.500" cy="6.500" r="5.500" stroke="#333"/><path d="M3.500 6.500h6M6.500 3.500v6" stroke="#333"/></svg>
<div class="a" style="left:39px;top:676px;height:21px;line-height:21px;font-size:12px;font-weight:bold;color:#111;white-space:pre">Profit: 248.22  Credit: 0.00  Deposit: 0.00  Withdrawal: 0.00  Balance: 248.22</div>
<div class="a" style="right:430px;top:676px;height:21px;line-height:21px;font-size:11.500px;font-weight:bold;color:#111">0.00</div>
<div class="a" style="right:105px;top:676px;height:21px;line-height:21px;font-size:11.500px;font-weight:bold;color:#111">248.22</div>
<div class="a" style="left:0;top:697px;width:1920px;height:1px;background:#fff"></div>
</body></html>
